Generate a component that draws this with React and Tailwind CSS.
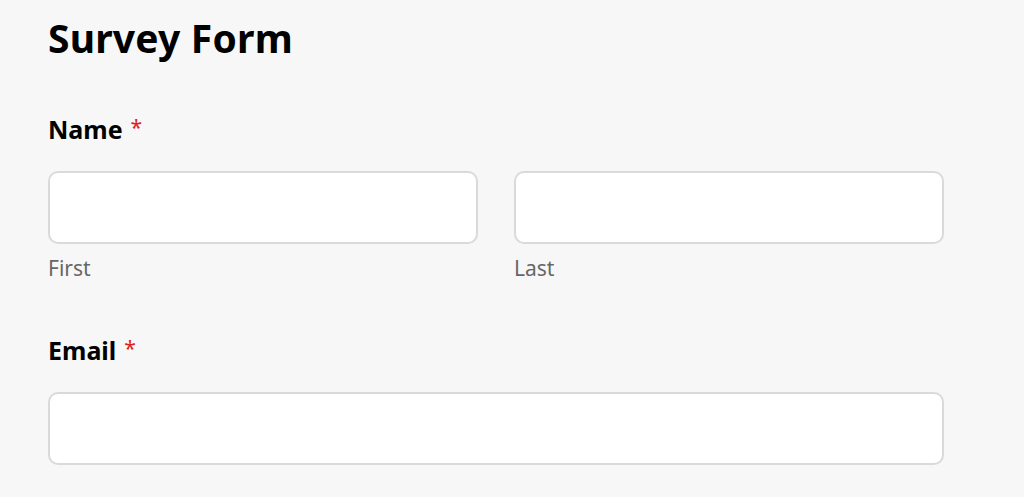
export default function App() {
  return (
    <div className="min-h-[497px] w-[1024px] bg-[#f7f7f7] px-[48px] pt-[11px] text-black" style={{ fontFamily: '"Noto Sans", "Open Sans", sans-serif' }}>
      <h1 className="text-[39px] font-bold leading-[54px] tracking-[0.2px]">Survey Form</h1>
      <div className="mt-[48px] w-[896px]">
        <div className="flex items-start text-[25px] font-bold leading-[32px]">
          Name <span className="ml-[8px] mt-[-2px] text-[21px] font-normal leading-[32px] text-[#e02020]">*</span>
        </div>
        <div className="mt-[26px] flex gap-[36px]">
          <div className="flex-1">
            <input className="block h-[73px] w-full rounded-[10px] border-2 border-[#dadada] bg-white" />
            <div className="mt-[9px] text-[21px] leading-[30px] text-[#666]">First</div>
          </div>
          <div className="flex-1">
            <input className="block h-[73px] w-full rounded-[10px] border-2 border-[#dadada] bg-white" />
            <div className="mt-[9px] text-[21px] leading-[30px] text-[#666]">Last</div>
          </div>
        </div>
        <div className="mt-[51px] flex items-start text-[25px] font-bold leading-[32px]">
          Email <span className="ml-[8px] mt-[-2px] text-[21px] font-normal leading-[32px] text-[#e02020]">*</span>
        </div>
        <div className="mt-[26px]">
          <input className="block h-[73px] w-full rounded-[10px] border-2 border-[#dadada] bg-white" />
        </div>
      </div>
    </div>
  );
}
